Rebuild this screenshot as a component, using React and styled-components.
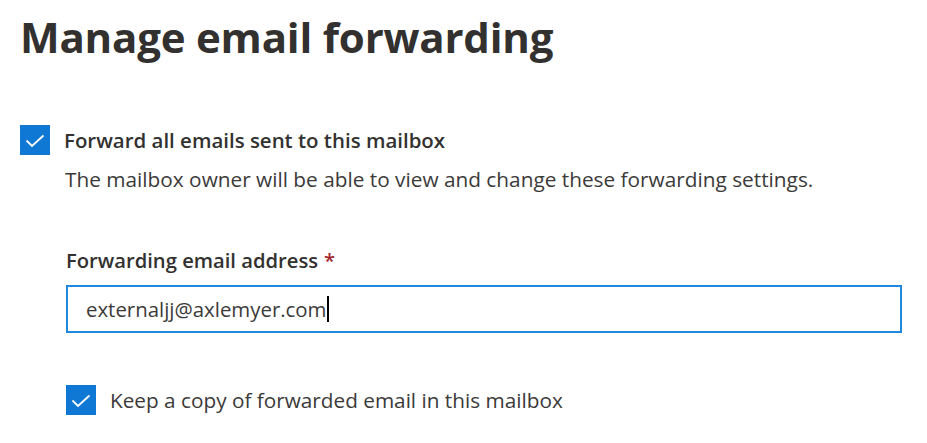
import styled, { createGlobalStyle } from 'styled-components'

const GlobalStyle = createGlobalStyle`
    html, body {
        margin: 0;
        padding: 0;
        background: #ffffff;
    }
    body {
        font-family: 'Open Sans', 'Noto Sans', sans-serif;
        color: #323130;
    }
`

const Page = styled.div`
    width: 927px;
    height: 443px;
    padding: 9px 0 0 20px;
    box-sizing: border-box;
    overflow: hidden;
`

const Title = styled.h1`
    margin: 0;
    font-size: 42px;
    font-weight: 700;
    line-height: 56px;
    color: #323130;
    letter-spacing: -0.2px;
`

const CheckRow = styled.label`
    display: flex;
    align-items: center;
    gap: ${props => props.gap || 14}px;
    margin-top: ${props => props.top || 0}px;
    margin-left: ${props => props.indent || 0}px;
`

const Box = styled.span`
    width: 30px;
    height: 30px;
    flex: none;
    background: #0f78d4;
    display: flex;
    align-items: center;
    justify-content: center;
`

const CheckText = styled.span`
    font-size: ${props => props.strong ? 20.45 : 20.75}px;
    line-height: 28px;
    font-weight: ${props => props.strong ? 600 : 400};
    color: ${props => props.strong ? '#323130' : '#3b3a39'};
`

const Hint = styled.p`
    margin: 10px 0 0 45px;
    font-size: 20.8px;
    line-height: 28px;
    color: #3b3a39;
`

const Field = styled.div`
    margin: 54px 0 0 46px;
    width: 836px;
`

const Label = styled.div`
    font-size: 20.2px;
    line-height: 27px;
    font-weight: 600;
    color: #323130;
    margin-bottom: 11px;

    span {
        color: #a4262c;
        margin-left: 6px;
    }
`

const Input = styled.div`
    height: 48px;
    border: 2px solid #1f87dc;
    box-sizing: border-box;
    display: flex;
    align-items: center;
    padding-left: 18px;
    font-size: 20.4px;
    color: #3b3a39;
`

const Caret = styled.span`
    display: inline-block;
    width: 1.5px;
    height: 26px;
    background: #000;
    margin-left: 1px;
`

const Tick = () => (
    <svg width="20" height="14" viewBox="0 0 20 14" style={{ marginTop: 2 }}>
        <path d="M1.5 6.5 L7 12 L18.5 1.5" fill="none" stroke="#ffffff" strokeWidth="1.8" />
    </svg>
)

export default function App() {
    return (
        <Page>
            <GlobalStyle />
            <Title>Manage email forwarding</Title>
            <CheckRow top={60}>
                <Box><Tick /></Box>
                <CheckText strong>Forward all emails sent to this mailbox</CheckText>
            </CheckRow>
            <Hint>The mailbox owner will be able to view and change these forwarding settings.</Hint>
            <Field>
                <Label>Forwarding email address<span>*</span></Label>
                <Input>externaljj@axlemyer.com<Caret /></Input>
            </Field>
            <CheckRow top={52} indent={46}>
                <Box><Tick /></Box>
                <CheckText>Keep a copy of forwarded email in this mailbox</CheckText>
            </CheckRow>
        </Page>
    )
}
